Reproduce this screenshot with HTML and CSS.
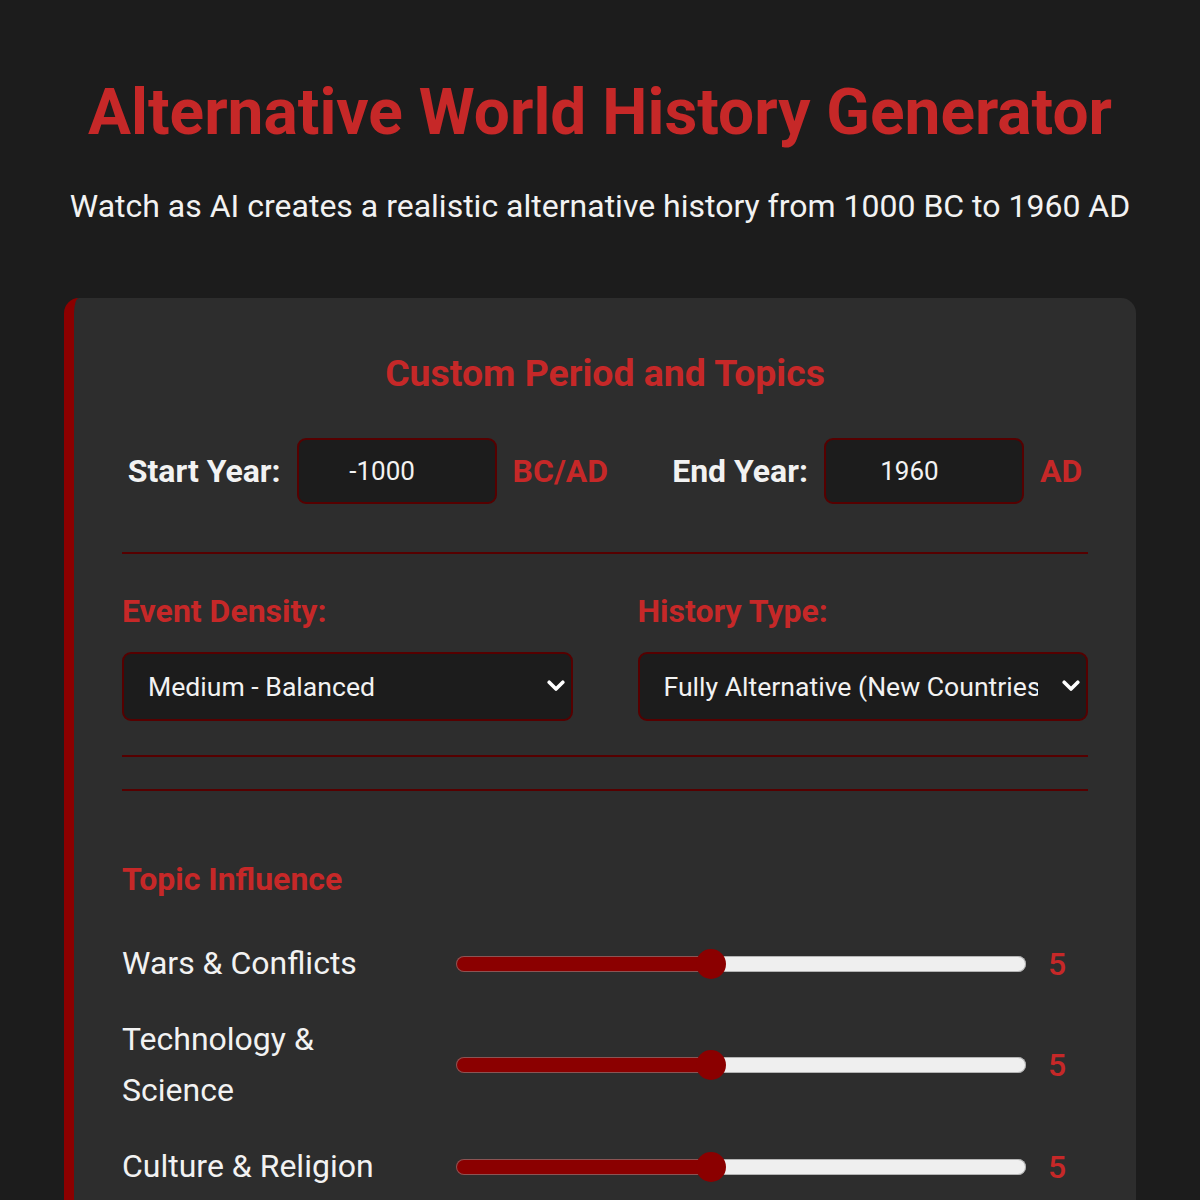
FILE: index.html
```html
<!DOCTYPE html>
<html lang="en">
<head>
<meta charset="utf-8">
<title>Alternative World History Generator</title>
<link rel="stylesheet" href="styles.css">
</head>
<body>
<div class="page">
  <header class="hero">
    <h1 class="title">Alternative World History Generator</h1>
    <p class="subtitle">Watch as AI creates a realistic alternative history from 1000 BC to 1960 AD</p>
  </header>

  <section class="card">
    <h2 class="card-title">Custom Period and Topics</h2>

    <div class="section years">
      <div class="year-group">
        <label class="year-label" for="start">Start Year:</label>
        <input class="year-input" id="start" type="text" value="-1000">
        <span class="era">BC/AD</span>
      </div>
      <div class="year-group">
        <label class="year-label" for="end">End Year:</label>
        <input class="year-input" id="end" type="text" value="1960">
        <span class="era">AD</span>
      </div>
    </div>

    <div class="section options">
      <div class="option">
        <label class="option-label" for="density">Event Density:</label>
        <div class="select-wrap">
          <select class="select" id="density">
            <option>Medium - Balanced</option>
          </select>
          <svg class="chevron" viewBox="0 0 18 12" width="18" height="12"><path d="M2.2 2.2 L9 9 L15.8 2.2" fill="none" stroke="#fff" stroke-width="3.6" stroke-linecap="round" stroke-linejoin="round"/></svg>
        </div>
      </div>
      <div class="option">
        <label class="option-label" for="type">History Type:</label>
        <div class="select-wrap">
          <select class="select" id="type">
            <option>Fully Alternative (New Countries &amp; Empires)</option>
          </select>
          <svg class="chevron" viewBox="0 0 18 12" width="18" height="12"><path d="M2.2 2.2 L9 9 L15.8 2.2" fill="none" stroke="#fff" stroke-width="3.6" stroke-linecap="round" stroke-linejoin="round"/></svg>
        </div>
      </div>
    </div>

    <div class="section empty"></div>

    <div class="topics">
      <h3 class="topics-title">Topic Influence</h3>
      <div class="topic-row">
        <span class="topic-label">Wars &amp; Conflicts</span>
        <input class="slider" type="range" min="1" max="10" value="5">
        <span class="topic-value">5</span>
      </div>
      <div class="topic-row">
        <span class="topic-label">Technology &amp; Science</span>
        <input class="slider" type="range" min="1" max="10" value="5">
        <span class="topic-value">5</span>
      </div>
      <div class="topic-row">
        <span class="topic-label">Culture &amp; Religion</span>
        <input class="slider" type="range" min="1" max="10" value="5">
        <span class="topic-value">5</span>
      </div>
    </div>
  </section>
</div>
</body>
</html>
```

FILE: styles.css
```css
* { box-sizing: border-box; }

html, body {
  margin: 0;
  padding: 0;
  background: #1c1c1c;
  color: #eeeeee;
  font-family: Roboto, "Liberation Sans", Arial, sans-serif;
}

.page {
  padding: 76px 64px 0;
}

.hero {
  text-align: center;
}

.title {
  margin: 0;
  font-size: 64px;
  font-weight: 700;
  line-height: 1.17;
  color: #c62828;
}

.subtitle {
  margin: 37px -30px 0;
  font-size: 32px;
  font-weight: 400;
  line-height: 1.17;
  color: #f2f2f2;
  white-space: nowrap;
}

.card {
  margin-top: 73px;
  background: #2d2d2d;
  border-left: 10px solid #8b0000;
  border-radius: 15px;
  padding: 54px 48px 48px;
}

.card-title {
  margin: 0;
  text-align: center;
  font-size: 37.4px;
  font-weight: 700;
  line-height: 43px;
  color: #c62828;
}

.section {
  border-bottom: 2px solid #560000;
}

.years {
  margin-top: 43px;
  padding-bottom: 48px;
  display: flex;
  justify-content: center;
  align-items: center;
  gap: 64px;
}

.year-group {
  display: flex;
  align-items: center;
  gap: 16px;
}

.year-label {
  font-size: 32px;
  font-weight: 700;
  color: #f2f2f2;
}

.year-input {
  width: 200px;
  height: 66px;
  background: #1c1c1c;
  border: 2px solid #560000;
  border-radius: 9px;
  color: #f2f2f2;
  font-family: Roboto, "Liberation Sans", Arial, sans-serif;
  font-size: 26px;
  font-weight: 400;
  text-align: center;
  padding: 0 29px 0 0;
  outline: none;
}

.era {
  font-size: 32px;
  font-weight: 700;
  color: #c62828;
}

.options {
  padding: 39px 0 34px;
  display: grid;
  grid-template-columns: 1fr 1fr;
  column-gap: 65px;
}

.option {
  display: flex;
  flex-direction: column;
  gap: 23px;
}

.option-label {
  font-size: 32px;
  font-weight: 700;
  line-height: 36px;
  color: #c62828;
}

.select-wrap {
  position: relative;
}

.select {
  display: block;
  width: 100%;
  height: 69px;
  appearance: none;
  -webkit-appearance: none;
  background: #1c1c1c;
  border: 2px solid #560000;
  border-radius: 9px;
  color: #f2f2f2;
  font-family: Roboto, "Liberation Sans", Arial, sans-serif;
  font-size: 26.6px;
  padding: 0 48px 0 24px;
  outline: none;
}

.chevron {
  position: absolute;
  right: 8px;
  top: 28px;
  pointer-events: none;
}

.empty {
  height: 34px;
}

.topics-title {
  margin: 69px 0 0;
  font-size: 32px;
  font-weight: 700;
  line-height: 38px;
  color: #c62828;
}

.topics {
  display: flex;
  flex-direction: column;
}

.topic-row {
  display: flex;
  align-items: center;
  margin-top: 25px;
}

.topics-title + .topic-row {
  margin-top: 40px;
}

.topic-label {
  flex: 0 0 300px;
  margin-right: 34px;
  font-size: 32px;
  line-height: 51px;
  color: #f2f2f2;
}

.slider {
  flex: 1;
  margin: 0;
  height: 16px;
  appearance: none;
  -webkit-appearance: none;
  border-radius: 8px;
  background: linear-gradient(to right, #8b0000 0 44.6%, #efefef 44.6% 100%);
  box-shadow: inset 0 0 0 1px rgba(140, 140, 140, 0.6);
  outline: none;
}

.slider::-webkit-slider-thumb {
  -webkit-appearance: none;
  appearance: none;
  width: 30px;
  height: 30px;
  border-radius: 50%;
  background: #8b0000;
  border: none;
}

.topic-value {
  flex: 0 0 40px;
  margin-left: 22px;
  font-size: 32px;
  font-weight: 500;
  color: #c62828;
}
```
